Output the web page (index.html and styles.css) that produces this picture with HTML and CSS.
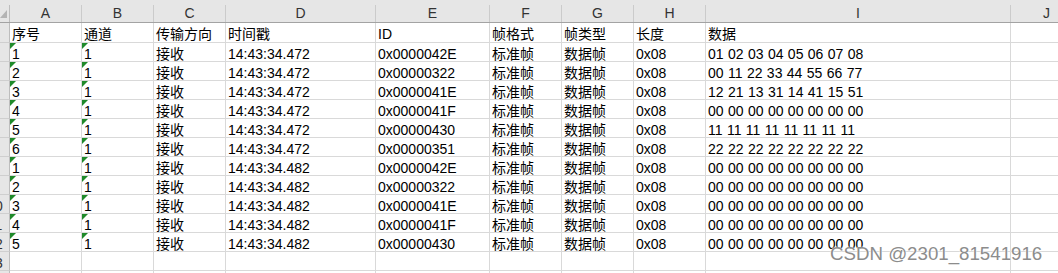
FILE: index.html
```html
<!DOCTYPE html>
<html>
<head>
<meta charset="utf-8">
<link rel="stylesheet" href="styles.css">
</head>
<body>
<div class="sheet">
  <div class="colbar">
    <div class="corner"><svg width="9" height="17" viewBox="0 0 9 17"><polygon points="7,5 7,13 0,13" fill="#b4b4b4"/></svg></div>
    <div>A</div><div>B</div><div>C</div><div>D</div><div>E</div><div>F</div><div>G</div><div>H</div><div>I</div><div class="last">J</div>
  </div>
  <div class="row head">
    <div class="rh"><span>1</span></div>
    <div>序号</div><div>通道</div><div>传输方向</div><div>时间戳</div><div>ID</div><div>帧格式</div><div>帧类型</div><div>长度</div><div>数据</div><div></div>
  </div>
  <div class="row">
    <div class="rh"><span>2</span></div>
    <div class="f">1</div><div class="f">1</div><div>接收</div><div>14:43:34.472</div><div>0x0000042E</div><div>标准帧</div><div>数据帧</div><div>0x08</div><div class="d">01 02 03 04 05 06 07 08</div><div></div>
  </div>
  <div class="row">
    <div class="rh"><span>3</span></div>
    <div class="f">2</div><div class="f">1</div><div>接收</div><div>14:43:34.472</div><div>0x00000322</div><div>标准帧</div><div>数据帧</div><div>0x08</div><div class="d">00 11 22 33 44 55 66 77</div><div></div>
  </div>
  <div class="row">
    <div class="rh"><span>4</span></div>
    <div class="f">3</div><div class="f">1</div><div>接收</div><div>14:43:34.472</div><div>0x0000041E</div><div>标准帧</div><div>数据帧</div><div>0x08</div><div class="d">12 21 13 31 14 41 15 51</div><div></div>
  </div>
  <div class="row">
    <div class="rh"><span>5</span></div>
    <div class="f">4</div><div class="f">1</div><div>接收</div><div>14:43:34.472</div><div>0x0000041F</div><div>标准帧</div><div>数据帧</div><div>0x08</div><div class="d">00 00 00 00 00 00 00 00</div><div></div>
  </div>
  <div class="row">
    <div class="rh"><span>6</span></div>
    <div class="f">5</div><div class="f">1</div><div>接收</div><div>14:43:34.472</div><div>0x00000430</div><div>标准帧</div><div>数据帧</div><div>0x08</div><div class="d">11 11 11 11 11 11 11 11</div><div></div>
  </div>
  <div class="row">
    <div class="rh"><span>7</span></div>
    <div class="f">6</div><div class="f">1</div><div>接收</div><div>14:43:34.472</div><div>0x00000351</div><div>标准帧</div><div>数据帧</div><div>0x08</div><div class="d">22 22 22 22 22 22 22 22</div><div></div>
  </div>
  <div class="row">
    <div class="rh"><span>8</span></div>
    <div class="f">1</div><div class="f">1</div><div>接收</div><div>14:43:34.482</div><div>0x0000042E</div><div>标准帧</div><div>数据帧</div><div>0x08</div><div class="d">00 00 00 00 00 00 00 00</div><div></div>
  </div>
  <div class="row">
    <div class="rh"><span>9</span></div>
    <div class="f">2</div><div class="f">1</div><div>接收</div><div>14:43:34.482</div><div>0x00000322</div><div>标准帧</div><div>数据帧</div><div>0x08</div><div class="d">00 00 00 00 00 00 00 00</div><div></div>
  </div>
  <div class="row">
    <div class="rh"><span>10</span></div>
    <div class="f">3</div><div class="f">1</div><div>接收</div><div>14:43:34.482</div><div>0x0000041E</div><div>标准帧</div><div>数据帧</div><div>0x08</div><div class="d">00 00 00 00 00 00 00 00</div><div></div>
  </div>
  <div class="row">
    <div class="rh"><span>11</span></div>
    <div class="f">4</div><div class="f">1</div><div>接收</div><div>14:43:34.482</div><div>0x0000041F</div><div>标准帧</div><div>数据帧</div><div>0x08</div><div class="d">00 00 00 00 00 00 00 00</div><div></div>
  </div>
  <div class="row">
    <div class="rh"><span>12</span></div>
    <div class="f">5</div><div class="f">1</div><div>接收</div><div>14:43:34.482</div><div>0x00000430</div><div>标准帧</div><div>数据帧</div><div>0x08</div><div class="d">00 00 00 00 00 00 00 00</div><div></div>
  </div>
  <div class="row">
    <div class="rh"><span>13</span></div>
    <div></div><div></div><div></div><div></div><div></div><div></div><div></div><div></div><div></div><div></div>
  </div>
  <div class="row">
    <div class="rh"></div>
    <div></div><div></div><div></div><div></div><div></div><div></div><div></div><div></div><div></div><div></div>
  </div>
  <div class="wm">CSDN @2301_81541916</div>
</div>
</body>
</html>
```

FILE: styles.css
```css
html, body {
  margin: 0;
  padding: 0;
  background: #ffffff;
}
body {
  width: 1058px;
  height: 273px;
  overflow: hidden;
  font-family: "Liberation Sans", "Noto Sans CJK SC", sans-serif;
  font-size: 14px;
  color: #000000;
}
.sheet {
  position: relative;
  width: 1083px;
  height: 273px;
  overflow: hidden;
}
.colbar,
.row {
  display: grid;
  grid-template-columns: 10px 72px 72px 72px 150px 114px 72px 72px 72px 305px 72px;
}
.colbar {
  background: #e6e6e6;
  border-bottom: 1px solid #a3a3a3;
  padding-top: 5px;
}
.colbar > div {
  box-sizing: border-box;
  height: 17px;
  line-height: 17px;
  text-align: center;
  color: #333333;
  border-right: 1px solid #cbcbcb;
}
.colbar > .corner {
  line-height: 0;
  text-align: left;
  border-right-color: #bdbdbd;
}
.row > div {
  box-sizing: border-box;
  height: 19px;
  padding: 3px 0 0 2px;
  line-height: 16px;
  white-space: nowrap;
  overflow: hidden;
  border-right: 1px solid #d9d9d9;
  border-bottom: 1px solid #d9d9d9;
}
.row.head > div {
  height: 20px;
}
.row > .rh {
  padding: 3px 0 0 0;
  background: #e6e6e6;
  border-right: 1px solid #bdbdbd;
  border-bottom: 1px solid #cfcfcf;
  color: #333333;
}
.rh > span {
  display: block;
  width: 30px;
  margin-left: -20px;
  text-align: center;
}
.row > .d {
  word-spacing: 0.5px;
}
.row > .f {
  position: relative;
}
.row > .f::before {
  content: "";
  position: absolute;
  top: 0;
  left: 0;
  width: 0;
  height: 0;
  border-top: 6px solid #1f8a2a;
  border-right: 6px solid transparent;
}
.wm {
  position: absolute;
  left: 830px;
  top: 244px;
  font-family: "Liberation Sans", sans-serif;
  font-size: 18.7px;
  line-height: 20px;
  color: #8c8c8c;
  text-shadow: 0 0 2px #ffffff, 0 0 1px #ffffff;
  white-space: nowrap;
}
```
